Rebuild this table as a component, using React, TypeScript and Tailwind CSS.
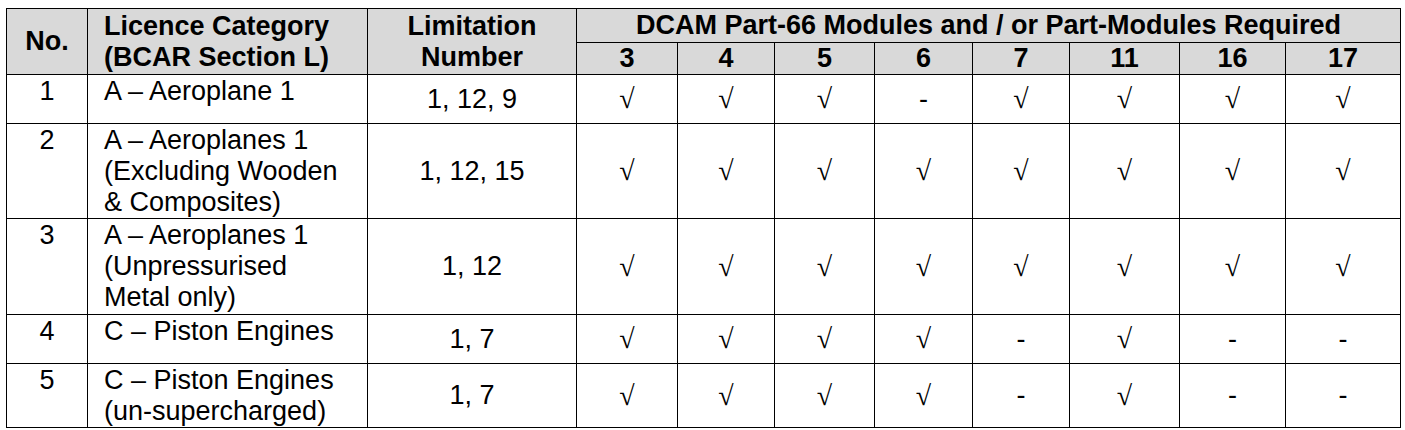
const modules = ['3', '4', '5', '6', '7', '11', '16', '17'];

type Row = {
  no: string;
  category: string[];
  limitation: string;
  marks: boolean[];
  height: string;
};

const rows: Row[] = [
  {
    no: '1',
    category: ['A – Aeroplane 1'],
    limitation: '1, 12, 9',
    marks: [true, true, true, false, true, true, true, true],
    height: 'h-[49px]',
  },
  {
    no: '2',
    category: ['A – Aeroplanes 1', '(Excluding Wooden', '& Composites)'],
    limitation: '1, 12, 15',
    marks: [true, true, true, true, true, true, true, true],
    height: 'h-[95px]',
  },
  {
    no: '3',
    category: ['A – Aeroplanes 1', '(Unpressurised', 'Metal only)'],
    limitation: '1, 12',
    marks: [true, true, true, true, true, true, true, true],
    height: 'h-[96px]',
  },
  {
    no: '4',
    category: ['C – Piston Engines'],
    limitation: '1, 7',
    marks: [true, true, true, true, false, true, false, false],
    height: 'h-[49px]',
  },
  {
    no: '5',
    category: ['C – Piston Engines', '(un-supercharged)'],
    limitation: '1, 7',
    marks: [true, true, true, true, false, true, false, false],
    height: 'h-[63px]',
  },
];

function Mark({ on }: { on: boolean }) {
  if (on) {
    return <span className="font-['Liberation_Serif',serif] text-[28px]">√</span>;
  }
  return <span>-</span>;
}

export default function App() {
  return (
    <div className="min-h-[430px] bg-white pl-[6px] pt-[8px] font-['Liberation_Sans',Arial,sans-serif] text-[27px] leading-[31px] text-black">
      <table className="w-[1395px] table-fixed border-collapse">
        <colgroup>
          <col className="w-[81px]" />
          <col className="w-[280px]" />
          <col className="w-[209px]" />
          <col className="w-[101px]" />
          <col className="w-[97px]" />
          <col className="w-[100px]" />
          <col className="w-[98px]" />
          <col className="w-[97px]" />
          <col className="w-[110px]" />
          <col className="w-[106px]" />
          <col className="w-[115px]" />
        </colgroup>
        <thead className="bg-[#d9d9d9] font-bold">
          <tr className="h-[34px]">
            <th rowSpan={2} className="border border-black p-0 text-center align-middle">
              No.
            </th>
            <th rowSpan={2} className="border border-black p-0 pl-[16px] text-left align-middle">
              Licence Category
              <br />
              (BCAR Section L)
            </th>
            <th rowSpan={2} className="border border-black p-0 text-center align-middle">
              Limitation
              <br />
              Number
            </th>
            <th colSpan={8} className="border border-black p-0 text-center align-middle">
              DCAM Part-66 Modules and / or Part-Modules Required
            </th>
          </tr>
          <tr className="h-[31px]">
            {modules.map((m) => (
              <th key={m} className="border border-black p-0 text-center align-middle">
                {m}
              </th>
            ))}
          </tr>
        </thead>
        <tbody>
          {rows.map((row) => (
            <tr key={row.no} className={row.height}>
              <td className="border border-black p-0 pt-[1px] text-center align-top">{row.no}</td>
              <td className="border border-black p-0 pl-[16px] pt-[1px] align-top">
                {row.category.map((line) => (
                  <div key={line}>{line}</div>
                ))}
              </td>
              <td className="border border-black p-0 text-center align-middle">{row.limitation}</td>
              {row.marks.map((on, i) => (
                <td key={i} className="border border-black p-0 text-center align-middle">
                  <Mark on={on} />
                </td>
              ))}
            </tr>
          ))}
        </tbody>
      </table>
    </div>
  );
}
